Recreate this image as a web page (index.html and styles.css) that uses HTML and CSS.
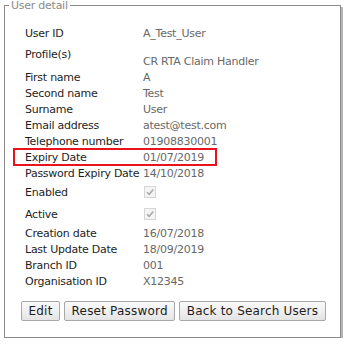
FILE: index.html
```html
<!DOCTYPE html>
<html lang="en">
<head>
  <meta charset="UTF-8" />
  <title>User detail</title>
  <link rel="stylesheet" href="styles.css">
</head>
<body>
  <fieldset class="panel">
    <legend>User detail</legend>

    <div class="details">
      <div class="row tall"><span class="label">User ID</span><span class="value">A_Test_User</span></div>
      <div class="row profile"><span class="label">Profile(s)</span><span class="value">CR RTA Claim Handler</span></div>
      <div class="row"><span class="label">First name</span><span class="value">A</span></div>
      <div class="row"><span class="label">Second name</span><span class="value">Test</span></div>
      <div class="row"><span class="label">Surname</span><span class="value">User</span></div>
      <div class="row"><span class="label">Email address</span><span class="value">atest@test.com</span></div>
      <div class="row"><span class="label">Telephone number</span><span class="value">01908830001</span></div>
      <div class="row highlight"><span class="label">Expiry Date</span><span class="value">01/07/2019</span></div>
      <div class="row"><span class="label">Password Expiry Date</span><span class="value">14/10/2018</span></div>
      <div class="row check-row">
        <span class="label">Enabled</span>
        <span class="value"><span class="checkbox"><svg width="10" height="10" viewBox="0 0 10 10"><path d="M2 5.2 L4.2 7.4 L8.2 2.6" fill="none" stroke="#a9a9a9" stroke-width="1.6"/></svg></span></span>
      </div>
      <div class="row check-row">
        <span class="label">Active</span>
        <span class="value"><span class="checkbox"><svg width="10" height="10" viewBox="0 0 10 10"><path d="M2 5.2 L4.2 7.4 L8.2 2.6" fill="none" stroke="#a9a9a9" stroke-width="1.6"/></svg></span></span>
      </div>
      <div class="row"><span class="label">Creation date</span><span class="value">16/07/2018</span></div>
      <div class="row"><span class="label">Last Update Date</span><span class="value">18/09/2019</span></div>
      <div class="row"><span class="label">Branch ID</span><span class="value">001</span></div>
      <div class="row"><span class="label">Organisation ID</span><span class="value">X12345</span></div>
    </div>

    <div class="actions">
      <button class="btn">Edit</button>
      <button class="btn">Reset Password</button>
      <button class="btn">Back to Search Users</button>
    </div>
  </fieldset>
</body>
</html>
```

FILE: styles.css
```css
* {
  box-sizing: border-box;
}

body {
  margin: 0;
  background-color: #ffffff;
  font-family: 'DejaVu Sans', Verdana, sans-serif;
  font-size: 11px;
  letter-spacing: -0.25px;
  color: #1e1e1e;
}

.panel {
  width: 337px;
  height: 338px;
  margin: 0 0 0 4px;
  padding: 0;
  border: 1px solid #8a8a8a;
  box-shadow: 2px 2px 0 #b5b5b5;
}

.panel legend {
  margin-left: 4px;
  padding: 0 2px;
  line-height: 11px;
  color: #8a8a8a;
}

.details {
  padding: 11px 0 0 20px;
}

.row {
  display: flex;
  align-items: center;
  height: 16px;
}

.row .label {
  width: 118px;
}

.row .value {
  color: #686868;
}

.row.tall {
  height: 22px;
}

.row.profile {
  height: 25px;
  align-items: flex-start;
}

.row.profile .label {
  padding-top: 4px;
}

.row.profile .value {
  padding-top: 11px;
}

.row.check-row {
  height: 22px;
}

.row.highlight {
  width: 204px;
  height: 18px;
  margin: -1px 0 -1px -12px;
  padding-left: 10px;
  border: 2px solid #e8131b;
}

.checkbox {
  display: flex;
  align-items: center;
  justify-content: center;
  width: 12px;
  height: 12px;
  margin-left: 1px;
  border: 1px solid #d6d6d6;
  background-color: #f4f4f4;
}

.actions {
  display: flex;
  gap: 4px;
  padding: 12px 0 0 16px;
}

.btn {
  height: 20px;
  padding: 0 6.5px;
  font-family: inherit;
  font-size: 12px;
  letter-spacing: 0.2px;
  color: #1e1e1e;
  background: linear-gradient(to bottom, #fafafa, #e4e4e4);
  border: 1px solid #a8a8a8;
  border-radius: 2px;
}
```
